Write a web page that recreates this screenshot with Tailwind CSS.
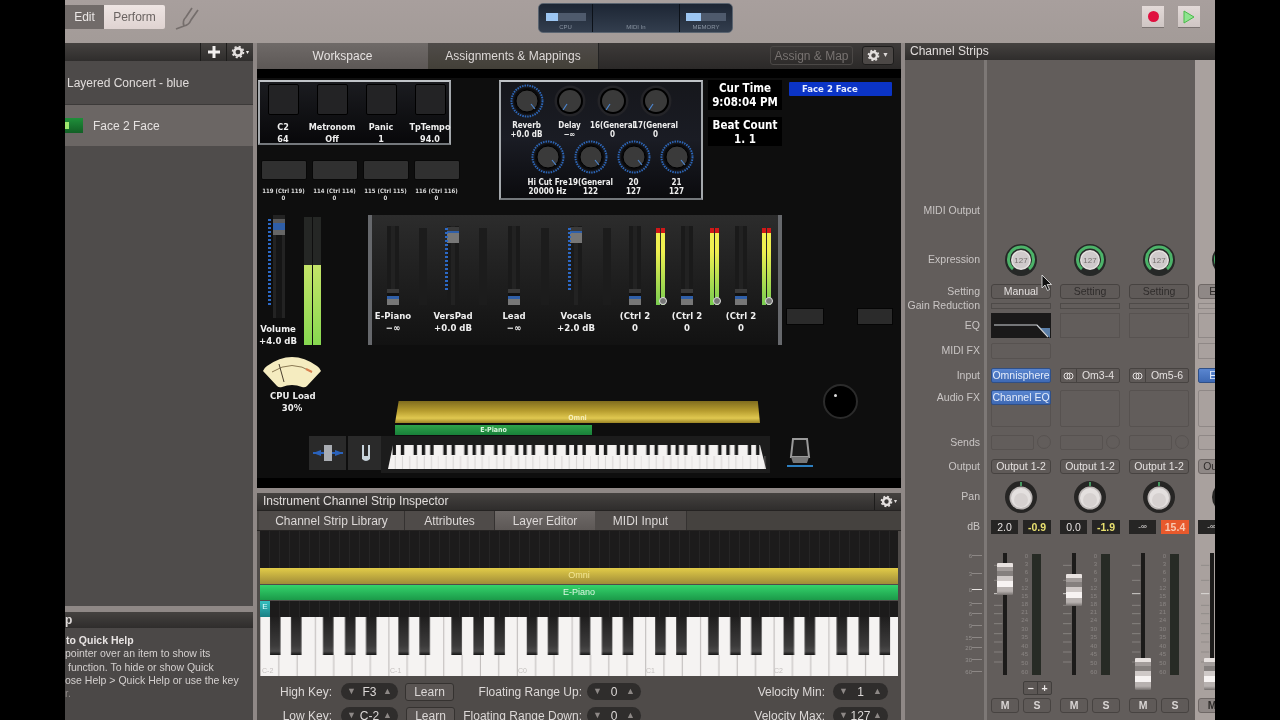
<!DOCTYPE html>
<html>
<head>
<meta charset="utf-8">
<script src="https://cdn.jsdelivr.net/npm/@tailwindcss/browser@4"></script>
</head>
<body class="bg-black">
<svg width="0" height="0" class="absolute">
  <defs>
    <symbol id="gear" viewBox="0 0 16 16"><circle cx="8" cy="8" r="4.2" fill="none" stroke="#e4e0df" stroke-width="3"/><circle cx="8" cy="8" r="6.2" fill="none" stroke="#e4e0df" stroke-width="2" stroke-dasharray="2.4 2.47"/></symbol>
    <symbol id="kb" viewBox="0 0 34 34"><circle cx="17" cy="17" r="15.5" fill="#15161b" stroke="#2e67b8" stroke-width="2" stroke-dasharray="1.5 1"/><circle cx="17" cy="17" r="13" fill="#0a0a0c"/><circle cx="17" cy="17" r="11" fill="#3a3a3a" stroke="#000" stroke-width="1"/><line x1="21" y1="20" x2="25" y2="25" stroke="#4d86d0" stroke-width="1.2"/></symbol>
    <symbol id="kd" viewBox="0 0 34 34"><circle cx="17" cy="17" r="15.5" fill="#242428"/><circle cx="17" cy="17" r="13" fill="#000"/><circle cx="17" cy="17" r="11" fill="#3a3a3a"/><line x1="14" y1="20" x2="10" y2="26" stroke="#4d86d0" stroke-width="1.2"/></symbol>
    <symbol id="expr" viewBox="0 0 32 32"><circle cx="16" cy="16" r="16" fill="#262827"/><path d="M8 25 A12.5 12.5 0 1 1 24 25" fill="none" stroke="#4cb369" stroke-width="3"/><circle cx="16" cy="16" r="10" fill="#e6e2e0"/><circle cx="16" cy="16" r="8.5" fill="#cfcacb"/><text x="16" y="19" text-anchor="middle" font-family="Liberation Sans" font-size="8" fill="#77716f">127</text></symbol>
    <symbol id="pan" viewBox="0 0 32 32"><circle cx="16" cy="16" r="16" fill="#262524"/><circle cx="16" cy="17" r="11.5" fill="#bdb8b7"/><circle cx="16" cy="17" r="10" fill="#e4e0df"/><circle cx="16" cy="19" r="7" fill="#d6d1d0"/><line x1="16" y1="1" x2="16" y2="5" stroke="#53c77a" stroke-width="1.4"/></symbol>
    <symbol id="fs" viewBox="0 0 12 123"><g stroke="#8d8886" stroke-width="1"><line x1="0" x2="10" y1="2.5" y2="2.5"/><line x1="0" x2="10" y1="20.5" y2="20.5"/><line x1="0" x2="10" y1="36.5" y2="36.5" stroke="#e8e4e2"/><line x1="0" x2="10" y1="50.5" y2="50.5"/><line x1="0" x2="10" y1="60.5" y2="60.5"/><line x1="0" x2="10" y1="72.5" y2="72.5"/><line x1="0" x2="10" y1="84.5" y2="84.5"/><line x1="0" x2="10" y1="94.5" y2="94.5"/><line x1="0" x2="10" y1="106.5" y2="106.5"/><line x1="0" x2="10" y1="118.5" y2="118.5"/></g></symbol>
    <symbol id="ms" viewBox="0 0 14 123"><g font-family="Liberation Sans" font-size="6" fill="#8b8684" text-anchor="end"><text x="10" y="5">0</text><text x="10" y="13">3</text><text x="10" y="21">6</text><text x="10" y="29">9</text><text x="10" y="37">12</text><text x="10" y="45">15</text><text x="10" y="53">18</text><text x="10" y="61">21</text><text x="10" y="69">24</text><text x="10" y="78">30</text><text x="10" y="86">35</text><text x="10" y="95">40</text><text x="10" y="103">45</text><text x="10" y="112">50</text><text x="10" y="121">60</text></g></symbol>
    <linearGradient id="bk" x1="0" y1="0" x2="0" y2="1"><stop offset="0" stop-color="#1f1e1e"/><stop offset="0.75" stop-color="#3c3b3b"/><stop offset="0.9" stop-color="#4a4949"/><stop offset="1" stop-color="#141414"/></linearGradient>
    <pattern id="bigkeys" width="128.4" height="59" patternUnits="userSpaceOnUse">
      <rect width="128.4" height="59" fill="#f5f3f2"/>
      <g stroke="#bdb9b8" stroke-width="1"><line x1="0.5" x2="0.5" y1="0" y2="59"/><line x1="18.8" x2="18.8" y1="38" y2="59"/><line x1="37.1" x2="37.1" y1="38" y2="59"/><line x1="55.4" x2="55.4" y1="0" y2="59"/><line x1="73.7" x2="73.7" y1="38" y2="59"/><line x1="92" x2="92" y1="38" y2="59"/><line x1="110.3" x2="110.3" y1="38" y2="59"/></g>
      <g fill="url(#bk)"><rect x="10" width="10.5" height="38"/><rect x="31" width="10.5" height="38"/><rect x="63" width="10.5" height="38"/><rect x="85" width="10.5" height="38"/><rect x="106" width="10.5" height="38"/></g>
    </pattern>
    <pattern id="smallkeys" width="50.75" height="26" patternUnits="userSpaceOnUse">
      <g fill="#1a1a1a"><rect x="4.6" width="3.4" height="10"/><rect x="12.8" width="3.4" height="10"/><rect x="25.6" width="3.4" height="10"/><rect x="33.8" width="3.4" height="10"/><rect x="42.2" width="3.4" height="10"/></g>
      <g stroke="#b9b5b4" stroke-width="0.5"><line x1="7.25" x2="7.25" y1="11" y2="26"/><line x1="14.5" x2="14.5" y1="11" y2="26"/><line x1="21.75" x2="21.75" y1="11" y2="26"/><line x1="29" x2="29" y1="11" y2="26"/><line x1="36.25" x2="36.25" y1="11" y2="26"/><line x1="43.5" x2="43.5" y1="11" y2="26"/><line x1="50.75" x2="50.75" y1="11" y2="26"/></g>
    </pattern>
  </defs>
</svg>

<div class="w-[1280px] h-[720px] overflow-hidden relative bg-black font-['Liberation_Sans',sans-serif] blur-[0.4px]">
<div class="ml-[65px] w-[1150px] h-[720px] flex flex-col bg-[#8f8886] overflow-hidden">

  <!-- toolbar -->
  <div class="h-[43px] shrink-0 flex bg-gradient-to-b from-[#a89f9d] to-[#a39b98]">
    <div class="mt-[5px] h-[24px] w-[39px] bg-[#716b69] text-[#ece8e7] text-[12px] flex items-center justify-center">Edit</div>
    <div class="mt-[5px] h-[24px] w-[61px] bg-gradient-to-b from-[#eee5e3] to-[#dfd3d1] text-[#6a6462] text-[12px] flex items-center justify-center rounded-r-[2px]">Perform</div>
    <svg class="mt-[7px] ml-[10px]" width="26" height="24" viewBox="0 0 26 24"><path d="M1 22 L9 19 M9 19 Q7 14 11 10 L17 1 M9 19 Q14 18 16 13 L23 3" stroke="#756e6c" stroke-width="1.7" fill="none"/></svg>
    <div class="mt-[3px] ml-[337px] h-[30px] w-[195px] rounded-[5px] bg-gradient-to-b from-[#1d2634] to-[#333e4e] border border-[#5a6470] flex">
      <div class="w-[54px] border-r border-[#0c1118] flex flex-col items-center">
        <div class="mt-[9px] w-[40px] h-[8px] bg-[#4e5a6c]"><div class="w-[12px] h-[8px] bg-[#9cc6f2]"></div></div>
        <span class="mt-[2px] text-[6px] leading-[8px] text-[#8a94a2]">CPU</span>
      </div>
      <div class="w-[87px] border-r border-[#0c1118] flex flex-col items-center">
        <div class="mt-[19px]"></div>
        <span class="text-[6px] leading-[8px] text-[#8a94a2]">MIDI In</span>
      </div>
      <div class="flex-1 flex flex-col items-center">
        <div class="mt-[9px] w-[40px] h-[8px] bg-[#4e5a6c]"><div class="w-[15px] h-[8px] bg-[#9cc6f2]"></div></div>
        <span class="mt-[2px] text-[6px] leading-[8px] text-[#8a94a2]">MEMORY</span>
      </div>
    </div>
    <div class="mt-[6px] ml-[409px] w-[22px] h-[22px] bg-gradient-to-b from-[#e3dad8] to-[#cfc6c4] border-b border-[#7b7472] flex items-center justify-center"><div class="w-[11px] h-[11px] rounded-full bg-[#e0103f]"></div></div>
    <div class="mt-[6px] ml-[14px] w-[22px] h-[22px] bg-gradient-to-b from-[#e3dad8] to-[#cfc6c4] border-b border-[#7b7472] flex items-center justify-center"><svg width="12" height="14" viewBox="0 0 12 14"><path d="M1 1 L11 7 L1 13 Z" fill="#8fe48f" stroke="#4ab94a"/></svg></div>
  </div>

  <!-- body -->
  <div class="flex gap-[4px] h-[677px]">

    <!-- left -->
    <div class="w-[188px] flex flex-col gap-[6px]">
      <div class="h-[563px] bg-[#4f4c4b] flex flex-col">
        <div class="h-[18px] bg-gradient-to-b from-[#454240] to-[#2f2d2c] flex justify-end text-[#efeceb]">
          <div class="w-[26px] border-l border-[#1d1c1b] flex items-center justify-center"><svg width="12" height="12" viewBox="0 0 12 12"><path d="M6 0 V12 M0 6 H12" stroke="#f2efee" stroke-width="3"/></svg></div>
          <div class="w-[27px] border-l border-[#1d1c1b] flex items-center justify-center gap-[1px]"><svg width="14" height="14"><use href="#gear"/></svg><span class="text-[6px]">▾</span></div>
        </div>
        <div class="h-[44px] bg-[#4d4a49] pl-[2px] flex items-center text-[12px] text-[#e0dcdb] border-b border-[#3c3a39]">Layered Concert - blue</div>
        <div class="h-[41px] bg-[#6b6664] flex items-center text-[12px] text-[#e6e2e1]">
          <div class="w-[18px] h-[15px] bg-gradient-to-b from-[#1f8f3a] to-[#125f25] flex items-center"><span class="w-[4px] h-[7px] bg-[#9ee66e]"></span></div>
          <span class="ml-[10px]">Face 2 Face</span>
        </div>
      </div>
      <div class="h-[108px] bg-[#4b4847] flex flex-col">
        <div class="h-[16px] bg-gradient-to-b from-[#454240] to-[#2f2d2c] text-[12px] leading-[16px] text-[#dcd8d7] font-bold">p</div>
        <div class="pt-[6px] text-[10.5px] leading-[13.3px] text-[#d4d0cf] whitespace-nowrap">
          <div class="pl-[1px] font-bold text-[#e8e4e3]">to Quick Help</div>
          <div>pointer over an item to show its</div>
          <div class="pl-[3px]">function. To hide or show Quick</div>
          <div>ose Help &gt; Quick Help or use the key</div>
          <div class="text-[#8f8a88]">r.</div>
        </div>
      </div>
    </div>

    <!-- center -->
    <div class="w-[644px] flex flex-col gap-[5px]">
      <div class="h-[445px] flex flex-col bg-black">
        <div class="h-[26px] bg-gradient-to-b from-[#3d3a39] to-[#2b2928] flex text-[12px] shrink-0">
          <div class="w-[171px] bg-gradient-to-b from-[#6f6a68] to-[#5d5856] text-[#e6e2e1] flex items-center justify-center">Workspace</div>
          <div class="w-[171px] bg-gradient-to-b from-[#4f4b49] to-[#434038] text-[#dedad9] flex items-center justify-center border-r border-[#222]">Assignments &amp; Mappings</div>
          <div class="ml-[171px] mt-[3px] w-[83px] h-[19px] rounded-[3px] border border-[#4b4846] text-[#787371] flex items-center justify-center">Assign &amp; Map</div>
          <div class="ml-[9px] mt-[3px] w-[32px] h-[19px] rounded-[3px] bg-[#4c4846] border border-[#1e1d1c] flex items-center justify-center gap-[2px] text-[#dcd8d7]"><svg width="13" height="13"><use href="#gear"/></svg><span class="text-[7px]">▼</span></div>
        </div>
        <!-- workspace canvas -->
        <div class="relative flex-1 bg-[#0e0e0e] border-t-[9px] border-b-[10px] border-black text-[#efefef] text-[9px] leading-[12px] font-bold font-['DejaVu_Sans',sans-serif] [font-stretch:condensed] overflow-hidden">
          <div class="absolute left-[1px] top-[2px] w-[193px] h-[65px] border-2 border-t-[#c0c4c8] border-x-[#a4a8ac] border-b-[#74787c] bg-gradient-to-b from-[#1b1c20] to-[#08080a] grid grid-cols-[repeat(4,49px)]">
            <div class="flex flex-col items-center -ml-[3px]"><div class="w-[31px] h-[31px] mt-[2px] bg-[#232325] rounded-[2px] border border-[#000]"></div><span class="mt-[6px]">C2</span><span>64</span></div>
            <div class="flex flex-col items-center -ml-[3px]"><div class="w-[31px] h-[31px] mt-[2px] bg-[#232325] rounded-[2px] border border-[#000]"></div><span class="mt-[6px]">Metronom</span><span>Off</span></div>
            <div class="flex flex-col items-center -ml-[3px]"><div class="w-[31px] h-[31px] mt-[2px] bg-[#232325] rounded-[2px] border border-[#000]"></div><span class="mt-[6px]">Panic</span><span>1</span></div>
            <div class="flex flex-col items-center -ml-[3px]"><div class="w-[31px] h-[31px] mt-[2px] bg-[#232325] rounded-[2px] border border-[#000]"></div><span class="mt-[6px]">TpTempo</span><span>94.0</span></div>
          </div>
          <div class="absolute left-[3px] top-[82px] grid grid-cols-[repeat(4,51px)] text-[6px] leading-[7px] text-[#dddddd]">
            <div class="flex flex-col items-center w-[47px]"><div class="w-[46px] h-[20px] bg-[#303030] border border-[#080808] rounded-[2px]"></div><span class="mt-[7px] whitespace-nowrap">119 (Ctrl 119)</span><span>0</span></div>
            <div class="flex flex-col items-center w-[47px]"><div class="w-[46px] h-[20px] bg-[#303030] border border-[#080808] rounded-[2px]"></div><span class="mt-[7px] whitespace-nowrap">114 (Ctrl 114)</span><span>0</span></div>
            <div class="flex flex-col items-center w-[47px]"><div class="w-[46px] h-[20px] bg-[#303030] border border-[#080808] rounded-[2px]"></div><span class="mt-[7px] whitespace-nowrap">115 (Ctrl 115)</span><span>0</span></div>
            <div class="flex flex-col items-center w-[47px]"><div class="w-[46px] h-[20px] bg-[#303030] border border-[#080808] rounded-[2px]"></div><span class="mt-[7px] whitespace-nowrap">116 (Ctrl 116)</span><span>0</span></div>
          </div>

          <!-- knob box -->
          <div class="absolute left-[242px] top-[2px] w-[204px] h-[120px] border-2 border-t-[#c0c4c8] border-x-[#a4a8ac] border-b-[#74787c] bg-gradient-to-b from-[#16171c] via-[#1a1c24] to-[#0b0b0e] text-[8px] leading-[9px]">
            <div class="pl-[4px] pt-[2px] grid grid-cols-[repeat(4,43px)]">
              <div class="flex flex-col items-center"><svg width="34" height="34"><use href="#kb"/></svg><span class="mt-[3px] whitespace-nowrap">Reverb</span><span>+0.0 dB</span></div>
              <div class="flex flex-col items-center"><svg width="34" height="34"><use href="#kd"/></svg><span class="mt-[3px] whitespace-nowrap">Delay</span><span>−∞</span></div>
              <div class="flex flex-col items-center"><svg width="34" height="34"><use href="#kd"/></svg><span class="mt-[3px] whitespace-nowrap">16(General</span><span>0</span></div>
              <div class="flex flex-col items-center"><svg width="34" height="34"><use href="#kd"/></svg><span class="mt-[3px] whitespace-nowrap">17(General</span><span>0</span></div>
            </div>
            <div class="pl-[25px] pt-[1px] grid grid-cols-[repeat(4,43px)]">
              <div class="flex flex-col items-center"><svg width="34" height="34"><use href="#kb"/></svg><span class="mt-[4px] whitespace-nowrap">Hi Cut Fre</span><span class="whitespace-nowrap">20000 Hz</span></div>
              <div class="flex flex-col items-center"><svg width="34" height="34"><use href="#kb"/></svg><span class="mt-[4px] whitespace-nowrap">19(General</span><span>122</span></div>
              <div class="flex flex-col items-center"><svg width="34" height="34"><use href="#kb"/></svg><span class="mt-[4px]">20</span><span>127</span></div>
              <div class="flex flex-col items-center"><svg width="34" height="34"><use href="#kb"/></svg><span class="mt-[4px]">21</span><span>127</span></div>
            </div>
          </div>

          <!-- clock -->
          <div class="absolute left-[451px] top-[2px] w-[74px] h-[30px] bg-black text-center text-[11.5px] leading-[14px] text-white pt-[1px]">Cur Time<br>9:08:04 PM</div>
          <div class="absolute left-[451px] top-[39px] w-[74px] h-[29px] bg-black text-center text-[11.5px] leading-[14px] text-white pt-[1px]">Beat Count<br>1. 1</div>
          <div class="absolute left-[532px] top-[4px] w-[103px] h-[14px] bg-[#0b34c6] rounded-[1px] text-[9.5px] leading-[14px] pl-[13px] text-[#e6ecff]">Face 2 Face</div>

          <!-- master -->
          <div class="absolute left-[16px] top-[137px] w-[12px] h-[103px] bg-[#232323]"><div class="absolute left-[3px] top-[15px] w-[6px] h-[88px] bg-[#151515]"></div><div class="absolute top-[4px] w-[12px] h-[16px] bg-[linear-gradient(180deg,#5a5a5a_0_25%,#2f5fa8_25%_70%,#666_70%)]"></div></div>
          <div class="absolute left-[11px] top-[141px] w-[3px] h-[88px] bg-[repeating-linear-gradient(180deg,#2c69c6_0_2px,transparent_2px_4px)]"></div>
          <div class="absolute left-[47px] top-[139px] flex gap-[1px]">
            <div class="w-[8px] h-[128px] bg-[#252725] flex flex-col justify-end"><div class="h-[80px] bg-gradient-to-b from-[#c4e468] to-[#86d850]"></div></div>
            <div class="w-[8px] h-[128px] bg-[#252725] flex flex-col justify-end"><div class="h-[80px] bg-gradient-to-b from-[#c4e468] to-[#86d850]"></div></div>
          </div>
          <div class="absolute left-[1px] top-[245px] w-[40px] text-center whitespace-nowrap text-[9.5px] leading-[12px]">Volume<br>+4.0 dB</div>

          <!-- mixer -->
          <div class="absolute left-[111px] top-[137px] w-[414px] h-[130px] bg-gradient-to-b from-[#2c2c2c] to-[#121212] border-x-4 border-[#66686c] text-[9.5px]">
            <div class="absolute left-[-9px] top-[11px] w-[60px] flex flex-col items-center"><div class="relative w-[12px] h-[79px] bg-[#222] border-x-[4px] border-[#1a1a1a]"><div class="absolute left-[-4px] bottom-0 w-[12px] h-[16px] bg-[linear-gradient(180deg,#3a3a3a_0_25%,#111_25%_45%,#2f5fa8_45%_60%,#777_60%)]"></div></div><span class="mt-[5px]">E-Piano</span><span>−∞</span></div>
            <div class="absolute left-[47px] top-[13px] w-[8px] h-[77px] bg-[#1c1c1c]"></div>
            <div class="absolute left-[51px] top-[11px] w-[60px] flex flex-col items-center"><div class="relative w-[12px] h-[79px] bg-[#222] border-x-[4px] border-[#1a1a1a]"><div class="absolute left-[-4px] top-[1px] w-[12px] h-[16px] bg-[linear-gradient(180deg,#3a3a3a_0_25%,#2f5fa8_25%_40%,#777_40%)]"></div></div><span class="mt-[5px]">VersPad</span><span>+0.0 dB</span></div>
            <div class="absolute left-[107px] top-[13px] w-[8px] h-[77px] bg-[#1c1c1c]"></div>
            <div class="absolute left-[112px] top-[11px] w-[60px] flex flex-col items-center"><div class="relative w-[12px] h-[79px] bg-[#222] border-x-[4px] border-[#1a1a1a]"><div class="absolute left-[-4px] bottom-0 w-[12px] h-[16px] bg-[linear-gradient(180deg,#3a3a3a_0_25%,#111_25%_45%,#2f5fa8_45%_60%,#777_60%)]"></div></div><span class="mt-[5px]">Lead</span><span>−∞</span></div>
            <div class="absolute left-[169px] top-[13px] w-[8px] h-[77px] bg-[#1c1c1c]"></div>
            <div class="absolute left-[174px] top-[11px] w-[60px] flex flex-col items-center"><div class="relative w-[12px] h-[79px] bg-[#222] border-x-[4px] border-[#1a1a1a]"><div class="absolute left-[-4px] top-[1px] w-[12px] h-[16px] bg-[linear-gradient(180deg,#3a3a3a_0_25%,#2f5fa8_25%_40%,#777_40%)]"></div></div><span class="mt-[5px]">Vocals</span><span>+2.0 dB</span></div>
            <div class="absolute left-[231px] top-[13px] w-[8px] h-[77px] bg-[#1c1c1c]"></div>
            <div class="absolute left-[233px] top-[11px] w-[60px] flex flex-col items-center"><div class="relative w-[12px] h-[79px] bg-[#222] border-x-[4px] border-[#1a1a1a]"><div class="absolute left-[-4px] bottom-0 w-[12px] h-[16px] bg-[linear-gradient(180deg,#3a3a3a_0_25%,#111_25%_45%,#2f5fa8_45%_60%,#777_60%)]"></div></div><span class="mt-[5px]">(Ctrl 2</span><span>0</span></div>
            <div class="absolute left-[285px] top-[11px] w-[60px] flex flex-col items-center"><div class="relative w-[12px] h-[79px] bg-[#222] border-x-[4px] border-[#1a1a1a]"><div class="absolute left-[-4px] bottom-0 w-[12px] h-[16px] bg-[linear-gradient(180deg,#3a3a3a_0_25%,#111_25%_45%,#2f5fa8_45%_60%,#777_60%)]"></div></div><span class="mt-[5px]">(Ctrl 2</span><span>0</span></div>
            <div class="absolute left-[339px] top-[11px] w-[60px] flex flex-col items-center"><div class="relative w-[12px] h-[79px] bg-[#222] border-x-[4px] border-[#1a1a1a]"><div class="absolute left-[-4px] bottom-0 w-[12px] h-[16px] bg-[linear-gradient(180deg,#3a3a3a_0_25%,#111_25%_45%,#2f5fa8_45%_60%,#777_60%)]"></div></div><span class="mt-[5px]">(Ctrl 2</span><span>0</span></div>
            <div class="absolute left-[73px] top-[13px] w-[3px] h-[62px] bg-[repeating-linear-gradient(180deg,#2c69c6_0_2px,transparent_2px_4px)]"></div>
            <div class="absolute left-[196px] top-[13px] w-[3px] h-[62px] bg-[repeating-linear-gradient(180deg,#2c69c6_0_2px,transparent_2px_4px)]"></div>
            <div class="absolute left-[284px] top-[13px] flex gap-[1px]"><div class="w-[4px] h-[77px] bg-[linear-gradient(180deg,#d01818_0_7%,#f0f050_7%_30%,#78cc50_100%)]"></div><div class="relative w-[4px] h-[77px] bg-[linear-gradient(180deg,#d01818_0_7%,#f0f050_7%_30%,#78cc50_100%)]"><div class="absolute left-[-2px] bottom-0 w-[8px] h-[8px] rounded-full border border-[#ddd] bg-[#777]"></div></div></div>
            <div class="absolute left-[338px] top-[13px] flex gap-[1px]"><div class="w-[4px] h-[77px] bg-[linear-gradient(180deg,#d01818_0_7%,#f0f050_7%_30%,#78cc50_100%)]"></div><div class="relative w-[4px] h-[77px] bg-[linear-gradient(180deg,#d01818_0_7%,#f0f050_7%_30%,#78cc50_100%)]"><div class="absolute left-[-2px] bottom-0 w-[8px] h-[8px] rounded-full border border-[#ddd] bg-[#777]"></div></div></div>
            <div class="absolute left-[390px] top-[13px] flex gap-[1px]"><div class="w-[4px] h-[77px] bg-[linear-gradient(180deg,#d01818_0_7%,#f0f050_7%_30%,#78cc50_100%)]"></div><div class="relative w-[4px] h-[77px] bg-[linear-gradient(180deg,#d01818_0_7%,#f0f050_7%_30%,#78cc50_100%)]"><div class="absolute left-[-2px] bottom-0 w-[8px] h-[8px] rounded-full border border-[#ddd] bg-[#777]"></div></div></div>
          </div>
          <div class="absolute left-[529px] top-[230px] w-[38px] h-[17px] bg-[#2b2b2b] border border-[#050505]"></div>
          <div class="absolute left-[600px] top-[230px] w-[36px] h-[17px] bg-[#2b2b2b] border border-[#050505]"></div>

          <!-- cpu gauge -->
          <svg class="absolute left-[3px] top-[276px]" width="64" height="36" viewBox="0 0 64 36"><path d="M3 17 Q4 14 7 12 Q32 -6 57 12 Q60 14 61 17 L47 32 Q45 34 42 33 Q32 29 22 33 Q19 34 17 32 Z" fill="#f5ecc0"/><path d="M12 18 Q32 5 52 18" fill="none" stroke="#8c7a54" stroke-width="1"/><line x1="24" y1="28" x2="19" y2="10" stroke="#4a4030" stroke-width="1"/><path d="M46 15 L52 18" stroke="#d98050" stroke-width="2"/></svg>
          <div class="absolute left-[13px] top-[312px] w-[44px] text-center whitespace-nowrap text-[9.5px] leading-[12px]">CPU Load<br>30%</div>

          <!-- layer bars -->
          <div class="absolute left-[138px] top-[323px] w-[365px] h-[22px] bg-[linear-gradient(180deg,#7f6c1e_0%,#b79d2f_45%,#e0c850_78%,#9c8526_100%)] [clip-path:polygon(1%_0,99.4%_0,100%_100%,0_100%)] text-center text-[7px] leading-[7px] pt-[14px] text-[#f7eeb8]">Omni</div>
          <div class="absolute left-[138px] top-[347px] w-[197px] h-[10px] bg-gradient-to-b from-[#2ea44a] to-[#18803a] text-center text-[7px] leading-[10px] text-[#d9f5de]">E-Piano</div>

          <!-- keyboard row -->
          <div class="absolute left-[52px] top-[358px] w-[37px] h-[34px] bg-[#2a2a2a] flex items-center justify-center"><svg width="32" height="24" viewBox="0 0 32 24"><path d="M1 12 L9 9 V15 Z M31 12 L23 9 V15 Z" fill="#2a62bb"/><rect x="1" y="11" width="30" height="2" fill="#2a62bb"/><path d="M12 4 H20 V20 H12 Z" fill="#a9adb3"/></svg></div>
          <div class="absolute left-[91px] top-[358px] w-[35px] h-[34px] bg-[#2a2a2a] flex items-center justify-center"><svg width="12" height="20" viewBox="0 0 12 20"><path d="M2 2 L2 16 Q6 20 10 16 L10 2 L8 2 L8 13 L4 13 L4 2 Z" fill="#c8d4dc"/></svg></div>
          <div class="absolute left-[124px] top-[358px] w-[389px] h-[37px] bg-[#1c1c1c]"></div>
          <svg class="absolute left-[131px] top-[367px]" width="380" height="24" viewBox="0 0 380 24"><polygon points="5,0 372,0 378,24 0,24" fill="#f4f2f1"/><rect x="0" y="0" width="380" height="24" fill="url(#smallkeys)"/></svg>
          <svg class="absolute left-[526px] top-[357px]" width="34" height="36" viewBox="0 0 34 36"><path d="M10 4 H24 L26 22 H8 Z" fill="#1a1a1a" stroke="#9a9a9a" stroke-width="2"/><path d="M8 22 L26 22 L24 28 L10 28 Z" fill="#777"/><rect x="4" y="30" width="26" height="2" fill="#2d7fc0"/></svg>
          <div class="absolute left-[566px] top-[306px] w-[35px] h-[35px] rounded-full bg-black border-2 border-[#2b2b2b]"><div class="absolute left-[9px] top-[8px] w-[3px] h-[3px] rounded-full bg-[#dddddd]"></div></div>
        </div>
      </div>

      <!-- inspector -->
      <div class="h-[227px] bg-[#4f4b49] flex flex-col overflow-hidden">
        <div class="h-[17px] shrink-0 bg-gradient-to-b from-[#454240] to-[#2f2d2c] text-[12px] leading-[17px] pl-[6px] text-[#e0dcdb] flex justify-between">
          <span>Instrument Channel Strip Inspector</span>
          <div class="w-[27px] border-l border-[#1d1c1b] flex items-center justify-center gap-[1px]"><svg width="13" height="13"><use href="#gear"/></svg><span class="text-[6px]">▾</span></div>
        </div>
        <div class="h-[21px] shrink-0 bg-[#45423f] border-y border-[#252322] flex text-[12px] text-[#dcd8d7] pl-[2px]">
          <div class="w-[146px] bg-[#4f4b49] border-r border-[#353231] flex items-center justify-center">Channel Strip Library</div>
          <div class="w-[90px] bg-[#4f4b49] border-r border-[#353231] flex items-center justify-center">Attributes</div>
          <div class="w-[100px] bg-gradient-to-b from-[#6f6a68] to-[#5d5856] flex items-center justify-center">Layer Editor</div>
          <div class="w-[92px] bg-[#4f4b49] border-r border-[#353231] flex items-center justify-center">MIDI Input</div>
        </div>
        <div class="mx-[3px] w-[638px] flex flex-col shrink-0">
          <div class="h-[37px] bg-[repeating-linear-gradient(90deg,#1c1b1b_0_9px,#262525_9px_10px)]"></div>
          <div class="h-[16px] mb-[1px] bg-gradient-to-b from-[#e2cc48] to-[#a08c38] text-center text-[9px] leading-[14px] text-[#f3e795]">Omni</div>
          <div class="h-[15px] mb-[1px] bg-gradient-to-b from-[#34d46c] to-[#1b9a49] text-center text-[9px] leading-[14px] text-[#dcf7e2]">E-Piano</div>
          <div class="h-[16px] bg-[repeating-linear-gradient(90deg,#1c1b1b_0_9px,#262525_9px_10px)]"><div class="w-[10px] h-[16px] bg-gradient-to-b from-[#35c0c0] to-[#1a7f84] text-[8px] leading-[12px] text-center text-[#dff]">E</div></div>
          <div class="relative h-[59px]">
            <svg width="638" height="59" class="block"><rect width="638" height="59" fill="url(#bigkeys)"/></svg>
            <div class="absolute inset-x-0 bottom-[1px] text-[7px] leading-[8px] text-[#c4c0bf] flex">
              <span class="w-[128px] pl-[2px]">C-2</span><span class="w-[128px] pl-[2px]">C-1</span><span class="w-[128px] pl-[2px]">C0</span><span class="w-[128px] pl-[2px]">C1</span><span class="w-[126px] pl-[2px]">C2</span>
            </div>
          </div>
        </div>
        <div class="text-[12px] text-[#dcd8d7] pt-[7px] flex flex-col gap-[7px]">
          <div class="flex items-center h-[17px]">
            <span class="w-[75px] text-right">High Key:</span>
            <div class="ml-[9px] w-[57px] h-[17px] rounded-full bg-[#2f2d2c] flex items-center justify-between px-[6px]"><span class="text-[9px] text-[#8d8886]">▼</span><span>F3</span><span class="text-[9px] text-[#8d8886]">▲</span></div>
            <div class="ml-[7px] w-[49px] h-[18px] rounded-[3px] bg-[#5a5553] border border-[#353230] flex items-center justify-center">Learn</div>
            <span class="w-[128px] text-right">Floating Range Up:</span>
            <div class="ml-[5px] w-[54px] h-[17px] rounded-full bg-[#2f2d2c] flex items-center justify-between px-[6px]"><span class="text-[9px] text-[#8d8886]">▼</span><span>0</span><span class="text-[9px] text-[#8d8886]">▲</span></div>
            <span class="w-[184px] text-right">Velocity Min:</span>
            <div class="ml-[8px] w-[55px] h-[17px] rounded-full bg-[#2f2d2c] flex items-center justify-between px-[6px]"><span class="text-[9px] text-[#8d8886]">▼</span><span>1</span><span class="text-[9px] text-[#8d8886]">▲</span></div>
          </div>
          <div class="flex items-center h-[17px]">
            <span class="w-[75px] text-right">Low Key:</span>
            <div class="ml-[9px] w-[57px] h-[17px] rounded-full bg-[#2f2d2c] flex items-center justify-between px-[6px]"><span class="text-[9px] text-[#8d8886]">▼</span><span>C-2</span><span class="text-[9px] text-[#8d8886]">▲</span></div>
            <div class="ml-[8px] w-[49px] h-[18px] rounded-[3px] bg-[#5a5553] border border-[#353230] flex items-center justify-center">Learn</div>
            <span class="w-[127px] text-right whitespace-nowrap">Floating Range Down:</span>
            <div class="ml-[5px] w-[54px] h-[17px] rounded-full bg-[#2f2d2c] flex items-center justify-between px-[6px]"><span class="text-[9px] text-[#8d8886]">▼</span><span>0</span><span class="text-[9px] text-[#8d8886]">▲</span></div>
            <span class="w-[184px] text-right">Velocity Max:</span>
            <div class="ml-[8px] w-[55px] h-[17px] rounded-full bg-[#2f2d2c] flex items-center justify-between px-[6px]"><span class="text-[9px] text-[#8d8886]">▼</span><span>127</span><span class="text-[9px] text-[#8d8886]">▲</span></div>
          </div>
        </div>
      </div>
    </div>

    <!-- channel strips -->
    <div class="w-[310px] flex flex-col bg-[#625d5b] overflow-hidden">
      <div class="h-[17px] shrink-0 bg-gradient-to-b from-[#454240] to-[#2f2d2c] text-[12px] leading-[17px] pl-[5px] text-[#e0dcdb]">Channel Strips</div>
      <div class="flex flex-1 text-[10.5px]">
        <!-- labels -->
        <div class="w-[79px] shrink-0 relative flex flex-col items-end pr-[4px] text-[#c9c5c4] [&>div]:flex [&>div]:items-center">
          <div class="h-[144px]"></div>
          <div class="h-[14px]">MIDI Output</div>
          <div class="h-[26px]"></div>
          <div class="h-[32px]">Expression</div>
          <div class="h-[15px] mt-[8px]">Setting</div>
          <div class="h-[6px] mt-[4px] whitespace-nowrap">Gain Reduction</div>
          <div class="h-[25px] mt-[4px]">EQ</div>
          <div class="h-[16px] mt-[5px]">MIDI FX</div>
          <div class="h-[15px] mt-[9px]">Input</div>
          <div class="h-[15px] mt-[7px]">Audio FX</div>
          <div class="h-[15px] mt-[30px]">Sends</div>
          <div class="h-[15px] mt-[9px]">Output</div>
          <div class="h-[32px] mt-[7px]">Pan</div>
          <div class="h-[14px] mt-[7px]">dB</div>
          <svg class="absolute left-[60px] top-[493px]" width="19" height="123" viewBox="0 0 19 123"><use href="#fs" x="7" width="12" height="123"/><g font-family="Liberation Sans" font-size="6" fill="#94908e" text-anchor="end"><text x="7" y="5">6</text><text x="7" y="23">3</text><text x="7" y="39">0</text><text x="7" y="53">3</text><text x="7" y="63">6</text><text x="7" y="75">9</text><text x="7" y="87">15</text><text x="7" y="97">20</text><text x="7" y="109">30</text><text x="7" y="121">60</text></g></svg>
        </div>
        <div class="w-[3px] shrink-0 bg-[#7d7876]"></div>
        <!-- strips -->
        <div class="flex gap-[9px] pl-[4px] shrink-0 [&>div]:w-[60px] [&>div]:shrink-0">
          <!-- strip 1 -->
          <div class="flex flex-col">
            <div class="h-[184px]"></div>
            <div class="h-[32px] flex justify-center"><svg width="32" height="32"><use href="#expr"/></svg></div>
            <div class="h-[15px] mt-[8px] rounded-[3px] bg-[#5f5a58] border border-[#474341] text-center leading-[13px] text-[#e4e0df]">Manual</div>
            <div class="h-[6px] mt-[4px] border border-[#4e4a48]"></div>
            <div class="relative h-[25px] mt-[4px] bg-[#1a1919] overflow-hidden"><svg width="60" height="25"><path d="M46 12 L59 25 V15 H50 Z" fill="#5a7ea8"/><path d="M3 12 H46 L57 24" fill="none" stroke="#d0d4d8" stroke-width="1.2"/></svg></div>
            <div class="h-[16px] mt-[5px] rounded-[2px] border border-[#575250]"></div>
            <div class="h-[15px] mt-[9px] rounded-[2px] bg-gradient-to-b from-[#5a86d0] to-[#3e69b4] border border-[#2f4f86] text-center leading-[13px] text-[#e4ecfa]">Omnisphere</div>
            <div class="relative h-[37px] mt-[7px] rounded-[2px] border border-[#575250]"><div class="absolute -left-px -top-px w-[60px] h-[15px] rounded-[2px] bg-gradient-to-b from-[#5a86d0] to-[#3e69b4] border border-[#2f4f86] text-center leading-[13px] text-[#e4ecfa]">Channel EQ</div></div>
            <div class="h-[15px] mt-[8px] flex justify-between"><div class="w-[43px] rounded-[2px] border border-[#575250]"></div><div class="w-[14px] h-[14px] rounded-full border border-[#575250]"></div></div>
            <div class="h-[15px] mt-[9px] rounded-[3px] bg-[#5f5a58] border border-[#474341] text-center leading-[13px] text-[#e4e0df]">Output 1-2</div>
            <div class="h-[32px] mt-[7px] flex justify-center"><svg width="32" height="32"><use href="#pan"/></svg></div>
            <div class="h-[14px] mt-[7px] flex justify-between text-[#e6e2e1] text-center leading-[14px]"><div class="w-[27px] bg-[#262524]">2.0</div><div class="w-[28px] bg-[#262524] text-[#e8e070] font-bold">-0.9</div></div>
            <div class="relative h-[123px] mt-[19px]">
              <svg class="absolute left-[3px] top-0" width="10" height="123"><use href="#fs" width="10" height="123"/></svg>
              <div class="absolute left-[12px] top-0 w-[4px] h-[122px] bg-[#1c1b1a]"></div>
              <svg class="absolute left-[27px] top-0" width="14" height="123"><use href="#ms" width="14" height="123"/></svg>
              <div class="absolute left-[41px] top-[1px] w-[9px] h-[121px] bg-[#272b25]"></div>
              <div class="absolute left-[6px] top-[10px] w-[16px] h-[32px] rounded-[1px] bg-[linear-gradient(180deg,#e8e2e0_0_14%,#a39d9b_14%_24%,#85807e_24%_42%,#cfc9c7_42%_55%,#f7f3f2_55%_76%,#b7b1af_76%_88%,#75706e_100%)]"></div>
            </div>
            <div class="h-[14px] mt-[5px] ml-[32px] w-[29px] flex rounded-[2px] bg-[#5b5654] border border-[#413e3c] text-[#ece8e7] font-bold text-center leading-[12px]"><span class="flex-1 border-r border-[#413e3c]">−</span><span class="flex-1">+</span></div>
            <div class="h-[15px] mt-[3px] flex justify-between font-bold text-[#d8d4d3] text-center leading-[13px]"><div class="w-[28px] rounded-[3px] bg-[#5f5a58] border border-[#474341]">M</div><div class="w-[28px] rounded-[3px] bg-[#5f5a58] border border-[#474341]">S</div></div>
          </div>
          <!-- strip 2 -->
          <div class="flex flex-col">
            <div class="h-[184px]"></div>
            <div class="h-[32px] flex justify-center"><svg width="32" height="32"><use href="#expr"/></svg></div>
            <div class="h-[15px] mt-[8px] rounded-[3px] bg-[#5f5a58] border border-[#474341] text-center leading-[13px] text-[#2f2c2b]">Setting</div>
            <div class="h-[6px] mt-[4px] border border-[#4e4a48]"></div>
            <div class="h-[25px] mt-[4px] border border-[#575250]"></div>
            <div class="h-[16px] mt-[5px]"></div>
            <div class="h-[15px] mt-[9px] rounded-[2px] bg-[#5f5a58] border border-[#474341] flex text-[#e4e0df] leading-[13px] text-center"><span class="w-[16px] border-r border-[#474341] flex items-center justify-center"><svg width="11" height="8" viewBox="0 0 11 8"><circle cx="4" cy="4" r="3" fill="none" stroke="#e4e0df"/><circle cx="7" cy="4" r="3" fill="none" stroke="#e4e0df"/></svg></span><span class="flex-1">Om3-4</span></div>
            <div class="h-[37px] mt-[7px] rounded-[2px] border border-[#575250]"></div>
            <div class="h-[15px] mt-[8px] flex justify-between"><div class="w-[43px] rounded-[2px] border border-[#575250]"></div><div class="w-[14px] h-[14px] rounded-full border border-[#575250]"></div></div>
            <div class="h-[15px] mt-[9px] rounded-[3px] bg-[#5f5a58] border border-[#474341] text-center leading-[13px] text-[#e4e0df]">Output 1-2</div>
            <div class="h-[32px] mt-[7px] flex justify-center"><svg width="32" height="32"><use href="#pan"/></svg></div>
            <div class="h-[14px] mt-[7px] flex justify-between text-[#e6e2e1] text-center leading-[14px]"><div class="w-[27px] bg-[#262524]">0.0</div><div class="w-[28px] bg-[#262524] text-[#e8e070] font-bold">-1.9</div></div>
            <div class="relative h-[123px] mt-[19px]">
              <svg class="absolute left-[3px] top-0" width="10" height="123"><use href="#fs" width="10" height="123"/></svg>
              <div class="absolute left-[12px] top-0 w-[4px] h-[122px] bg-[#1c1b1a]"></div>
              <svg class="absolute left-[27px] top-0" width="14" height="123"><use href="#ms" width="14" height="123"/></svg>
              <div class="absolute left-[41px] top-[1px] w-[9px] h-[121px] bg-[#272b25]"></div>
              <div class="absolute left-[6px] top-[21px] w-[16px] h-[32px] rounded-[1px] bg-[linear-gradient(180deg,#e8e2e0_0_14%,#a39d9b_14%_24%,#85807e_24%_42%,#cfc9c7_42%_55%,#f7f3f2_55%_76%,#b7b1af_76%_88%,#75706e_100%)]"></div>
            </div>
            <div class="h-[14px] mt-[5px]"></div>
            <div class="h-[15px] mt-[3px] flex justify-between font-bold text-[#d8d4d3] text-center leading-[13px]"><div class="w-[28px] rounded-[3px] bg-[#5f5a58] border border-[#474341]">M</div><div class="w-[28px] rounded-[3px] bg-[#5f5a58] border border-[#474341]">S</div></div>
          </div>
          <!-- strip 3 -->
          <div class="flex flex-col">
            <div class="h-[184px]"></div>
            <div class="h-[32px] flex justify-center"><svg width="32" height="32"><use href="#expr"/></svg></div>
            <div class="h-[15px] mt-[8px] rounded-[3px] bg-[#5f5a58] border border-[#474341] text-center leading-[13px] text-[#2f2c2b]">Setting</div>
            <div class="h-[6px] mt-[4px] border border-[#4e4a48]"></div>
            <div class="h-[25px] mt-[4px] border border-[#575250]"></div>
            <div class="h-[16px] mt-[5px]"></div>
            <div class="h-[15px] mt-[9px] rounded-[2px] bg-[#5f5a58] border border-[#474341] flex text-[#e4e0df] leading-[13px] text-center"><span class="w-[16px] border-r border-[#474341] flex items-center justify-center"><svg width="11" height="8" viewBox="0 0 11 8"><circle cx="4" cy="4" r="3" fill="none" stroke="#e4e0df"/><circle cx="7" cy="4" r="3" fill="none" stroke="#e4e0df"/></svg></span><span class="flex-1">Om5-6</span></div>
            <div class="h-[37px] mt-[7px] rounded-[2px] border border-[#575250]"></div>
            <div class="h-[15px] mt-[8px] flex justify-between"><div class="w-[43px] rounded-[2px] border border-[#575250]"></div><div class="w-[14px] h-[14px] rounded-full border border-[#575250]"></div></div>
            <div class="h-[15px] mt-[9px] rounded-[3px] bg-[#5f5a58] border border-[#474341] text-center leading-[13px] text-[#e4e0df]">Output 1-2</div>
            <div class="h-[32px] mt-[7px] flex justify-center"><svg width="32" height="32"><use href="#pan"/></svg></div>
            <div class="h-[14px] mt-[7px] flex justify-between text-[#e6e2e1] text-center leading-[14px]"><div class="w-[27px] bg-[#262524] text-[8px]">-∞</div><div class="w-[28px] bg-[#e8592c] text-[#f8c8b0] font-bold">15.4</div></div>
            <div class="relative h-[123px] mt-[19px]">
              <svg class="absolute left-[3px] top-0" width="10" height="123"><use href="#fs" width="10" height="123"/></svg>
              <div class="absolute left-[12px] top-0 w-[4px] h-[122px] bg-[#1c1b1a]"></div>
              <svg class="absolute left-[27px] top-0" width="14" height="123"><use href="#ms" width="14" height="123"/></svg>
              <div class="absolute left-[41px] top-[1px] w-[9px] h-[121px] bg-[#272b25]"></div>
              <div class="absolute left-[6px] top-[105px] w-[16px] h-[32px] rounded-[1px] bg-[linear-gradient(180deg,#e8e2e0_0_14%,#a39d9b_14%_24%,#85807e_24%_42%,#cfc9c7_42%_55%,#f7f3f2_55%_76%,#b7b1af_76%_88%,#75706e_100%)]"></div>
            </div>
            <div class="h-[14px] mt-[5px]"></div>
            <div class="h-[15px] mt-[3px] flex justify-between font-bold text-[#d8d4d3] text-center leading-[13px]"><div class="w-[28px] rounded-[3px] bg-[#5f5a58] border border-[#474341]">M</div><div class="w-[28px] rounded-[3px] bg-[#5f5a58] border border-[#474341]">S</div></div>
          </div>
        </div>
        <!-- strip 4, cut off, on a lighter ground -->
        <div class="relative w-[20px] ml-[6px] pl-[3px] shrink-0 overflow-hidden bg-[#a9a19e]">
          <div class="w-[60px] flex flex-col">
            <div class="h-[184px]"></div>
            <div class="h-[32px] flex justify-center"><svg width="32" height="32"><use href="#expr"/></svg></div>
            <div class="h-[15px] mt-[8px] rounded-[3px] bg-[#8f8886] border border-[#6f6866] text-center leading-[13px] text-[#2f2c2b]">E-Piano</div>
            <div class="h-[6px] mt-[4px] border border-[#8f8886]"></div>
            <div class="h-[25px] mt-[4px] border border-[#8f8886]"></div>
            <div class="h-[16px] mt-[5px] border border-[#8f8886]"></div>
            <div class="h-[15px] mt-[9px] rounded-[2px] bg-gradient-to-b from-[#5a86d0] to-[#3e69b4] border border-[#2f4f86] text-center leading-[13px] text-[#e4ecfa]">E-Piano</div>
            <div class="h-[37px] mt-[7px] rounded-[2px] border border-[#8f8886]"></div>
            <div class="h-[15px] mt-[8px] rounded-[2px] border border-[#8f8886]"></div>
            <div class="h-[15px] mt-[9px] rounded-[3px] bg-[#8f8886] border border-[#6f6866] text-center leading-[13px] text-[#2f2c2b]">Output 1-2</div>
            <div class="h-[32px] mt-[7px] flex justify-center"><svg width="32" height="32"><use href="#pan"/></svg></div>
            <div class="h-[14px] mt-[7px] flex text-[#e6e2e1] text-center leading-[14px]"><div class="w-[27px] bg-[#262524] text-[8px]">-∞</div></div>
            <div class="relative h-[123px] mt-[19px]">
              <svg class="absolute left-[3px] top-0" width="10" height="123"><use href="#fs" width="10" height="123"/></svg>
              <div class="absolute left-[12px] top-0 w-[4px] h-[122px] bg-[#1c1b1a]"></div>
              <div class="absolute left-[6px] top-[105px] w-[16px] h-[32px] rounded-[1px] bg-[linear-gradient(180deg,#e8e2e0_0_14%,#a39d9b_14%_24%,#85807e_24%_42%,#cfc9c7_42%_55%,#f7f3f2_55%_76%,#b7b1af_76%_88%,#75706e_100%)]"></div>
            </div>
            <div class="h-[14px] mt-[5px]"></div>
            <div class="h-[15px] mt-[3px] font-bold text-[#2f2c2b] leading-[13px]"><div class="w-[28px] rounded-[3px] bg-[#8f8886] border border-[#6f6866] text-center">M</div></div>
          </div>
        </div>
      </div>
    </div>
  </div>
</div>
<!-- pointer -->
<svg class="absolute left-[1041px] top-[274px]" width="13" height="18" viewBox="0 0 13 18"><path d="M1 1 L1 14 L4 11 L6.5 16.5 L8.5 15.5 L6.2 10.5 L10.5 10.5 Z" fill="#111" stroke="#eee" stroke-width="0.8"/></svg>
</div>
</body>
</html>
